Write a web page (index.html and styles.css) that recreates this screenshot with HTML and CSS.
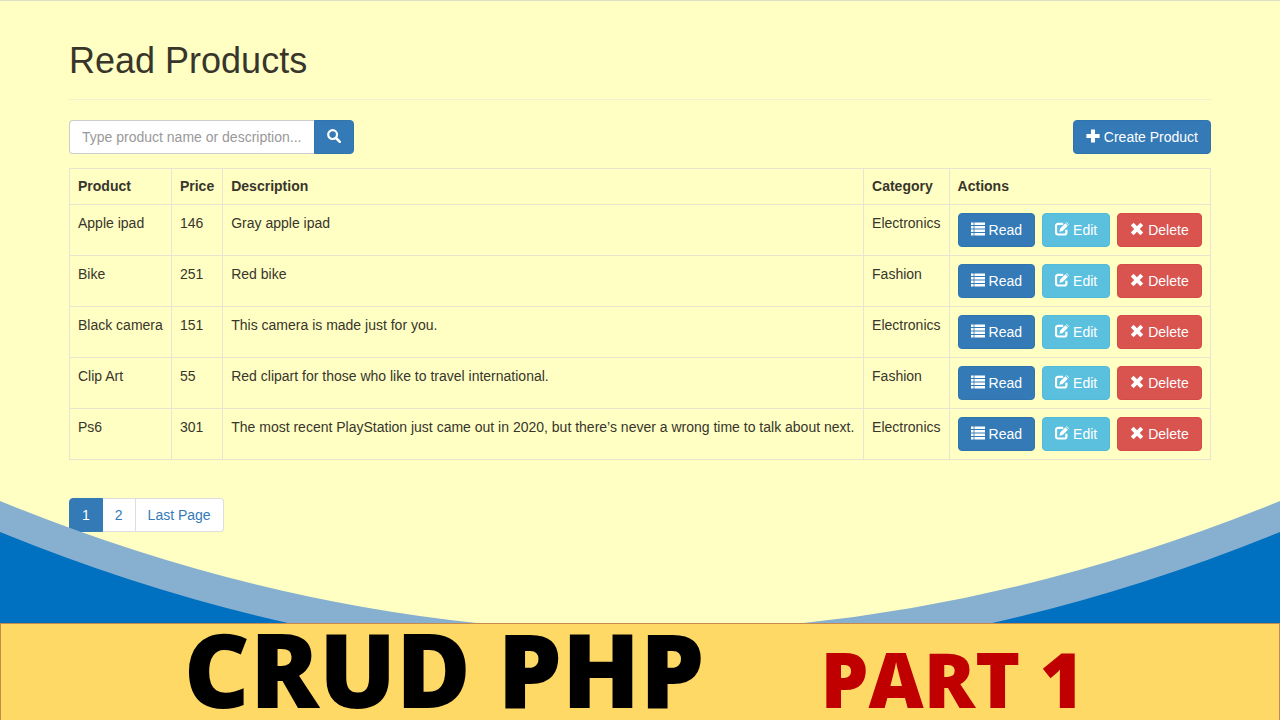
FILE: index.html
```html
<!DOCTYPE html>
<html lang="en">
<head>
    <meta charset="UTF-8">
    <meta name="viewport" content="width=device-width, initial-scale=1.0">
    <title>Read Products</title>
    <link rel="stylesheet" href="styles.css">
</head>
<body>
    <!-- Icons shared by the buttons -->
    <svg class="icon-defs" aria-hidden="true">
        <symbol id="icon-search" viewBox="0 0 14 14">
            <circle cx="5.6" cy="5.6" r="4.4" fill="none" stroke="currentColor" stroke-width="2.2"/>
            <path d="M9 9l3.8 3.8" stroke="currentColor" stroke-width="2.6" stroke-linecap="round"/>
        </symbol>
        <symbol id="icon-plus" viewBox="0 0 14 14">
            <path d="M5 .4h4V5h4.6v4H9v4.6H5V9H.4V5H5z" fill="currentColor"/>
        </symbol>
        <symbol id="icon-list" viewBox="0 0 14 14">
            <path d="M0 .5h2.6v2.6H0zM3.4 .5H14v2.6H3.4zM0 4h2.6v2.6H0zM3.4 4H14v2.6H3.4zM0 7.5h2.6v2.6H0zM3.4 7.5H14v2.6H3.4zM0 11h2.6v2.6H0zM3.4 11H14v2.6H3.4z" fill="currentColor"/>
        </symbol>
        <symbol id="icon-edit" viewBox="0 0 14 14">
            <path d="M8.2 1.9H3A2 2 0 0 0 1 3.9v6.6a2 2 0 0 0 2 2h6.4a2 2 0 0 0 2-2V7.8" fill="none" stroke="currentColor" stroke-width="2.2"/>
            <path d="M4.4 9.8l.8-3.4L10.4 1.2l2.5 2.5-5.2 5.2zM11.1 .5l.5-.5L14 2.4l-.5.5z" fill="currentColor"/>
        </symbol>
        <symbol id="icon-remove" viewBox="0 0 14 14">
            <path d="M3.6 .8L7 4.2 10.4 .8l2.8 2.8L9.8 7l3.4 3.4-2.8 2.8L7 9.8l-3.4 3.4-2.8-2.8L4.2 7 .8 3.6z" fill="currentColor"/>
        </symbol>
    </svg>

    <main class="page">
        <div class="container">
            <div class="page-header">
                <h1>Read Products</h1>
            </div>

            <!-- Search form and create button -->
            <div class="toolbar">
                <form class="search">
                    <input type="text" class="search-input" name="s" aria-label="Search products" placeholder="Type product name or description...">
                    <button type="submit" class="btn btn-primary search-btn" aria-label="Search"><svg class="icon"><use href="#icon-search"/></svg></button>
                </form>
                <a href="#" class="btn btn-primary"><svg class="icon"><use href="#icon-plus"/></svg>Create Product</a>
            </div>

            <!-- Product list -->
            <table class="products">
                <thead>
                    <tr>
                        <th>Product</th>
                        <th>Price</th>
                        <th>Description</th>
                        <th>Category</th>
                        <th>Actions</th>
                    </tr>
                </thead>
                <tbody>
                    <tr>
                        <td>Apple ipad</td>
                        <td>146</td>
                        <td>Gray apple ipad</td>
                        <td>Electronics</td>
                        <td>
                            <div class="actions">
                                <a href="#" class="btn btn-primary"><svg class="icon"><use href="#icon-list"/></svg>Read</a>
                                <a href="#" class="btn btn-info"><svg class="icon"><use href="#icon-edit"/></svg>Edit</a>
                                <a href="#" class="btn btn-danger"><svg class="icon"><use href="#icon-remove"/></svg>Delete</a>
                            </div>
                        </td>
                    </tr>
                    <tr>
                        <td>Bike</td>
                        <td>251</td>
                        <td>Red bike</td>
                        <td>Fashion</td>
                        <td>
                            <div class="actions">
                                <a href="#" class="btn btn-primary"><svg class="icon"><use href="#icon-list"/></svg>Read</a>
                                <a href="#" class="btn btn-info"><svg class="icon"><use href="#icon-edit"/></svg>Edit</a>
                                <a href="#" class="btn btn-danger"><svg class="icon"><use href="#icon-remove"/></svg>Delete</a>
                            </div>
                        </td>
                    </tr>
                    <tr>
                        <td>Black camera</td>
                        <td>151</td>
                        <td>This camera is made just for you.</td>
                        <td>Electronics</td>
                        <td>
                            <div class="actions">
                                <a href="#" class="btn btn-primary"><svg class="icon"><use href="#icon-list"/></svg>Read</a>
                                <a href="#" class="btn btn-info"><svg class="icon"><use href="#icon-edit"/></svg>Edit</a>
                                <a href="#" class="btn btn-danger"><svg class="icon"><use href="#icon-remove"/></svg>Delete</a>
                            </div>
                        </td>
                    </tr>
                    <tr>
                        <td>Clip Art</td>
                        <td>55</td>
                        <td>Red clipart for those who like to travel international.</td>
                        <td>Fashion</td>
                        <td>
                            <div class="actions">
                                <a href="#" class="btn btn-primary"><svg class="icon"><use href="#icon-list"/></svg>Read</a>
                                <a href="#" class="btn btn-info"><svg class="icon"><use href="#icon-edit"/></svg>Edit</a>
                                <a href="#" class="btn btn-danger"><svg class="icon"><use href="#icon-remove"/></svg>Delete</a>
                            </div>
                        </td>
                    </tr>
                    <tr>
                        <td>Ps6</td>
                        <td>301</td>
                        <td>The most recent PlayStation just came out in 2020, but there’s never a wrong time to talk about next.</td>
                        <td>Electronics</td>
                        <td>
                            <div class="actions">
                                <a href="#" class="btn btn-primary"><svg class="icon"><use href="#icon-list"/></svg>Read</a>
                                <a href="#" class="btn btn-info"><svg class="icon"><use href="#icon-edit"/></svg>Edit</a>
                                <a href="#" class="btn btn-danger"><svg class="icon"><use href="#icon-remove"/></svg>Delete</a>
                            </div>
                        </td>
                    </tr>
                </tbody>
            </table>

            <!-- Paging -->
            <ul class="pagination">
                <li><a href="#" class="active">1</a></li>
                <li><a href="#">2</a></li>
                <li><a href="#">Last Page</a></li>
            </ul>
        </div>

        <!-- Blue wave above the banner -->
        <svg class="wave" viewBox="0 0 1280 122" preserveAspectRatio="none" aria-hidden="true">
            <path class="wave-light" d="M0 0Q640 261 1280 0V122H0z"/>
            <path class="wave-dark" d="M0 31Q640 292 1280 31V122H0z"/>
        </svg>
    </main>

    <footer class="banner">
        <span class="banner-title">CRUD PHP</span>
        <span class="banner-part">PART 1</span>
    </footer>
</body>
</html>
```
FILE: styles.css
```css
* {
    box-sizing: border-box;
}

/* Basic page settings */
body {
    margin: 0;
    min-height: 100vh;
    display: flex;
    flex-direction: column;
    background: #ffffc4;
    border-top: 1px solid #dedfc8;
    color: #38352b;
    font-family: "Liberation Sans", Arial, sans-serif;
    font-size: 14px;
    line-height: 20px;
}

a {
    color: #337ab7;
    text-decoration: none;
}

.page {
    position: relative;
    flex: 1;
    overflow: hidden;
}

.container {
    margin: 0 69px;
}

.icon-defs {
    display: none;
}

/* Heading */
.page-header {
    margin: 40px 0 20px;
    padding-bottom: 18px;
    border-bottom: 1px solid #f3f0d0;
}

.page-header h1 {
    margin: 0;
    font-size: 36px;
    font-weight: 500;
    line-height: 40px;
}

/* Toolbar above the table */
.toolbar {
    display: flex;
    justify-content: space-between;
    margin-bottom: 14px;
}

.search {
    display: flex;
}

.search-input {
    width: 245px;
    height: 34px;
    padding: 6px 12px;
    background: #fff;
    border: 1px solid #ccc;
    border-right: 0;
    border-radius: 4px 0 0 4px;
    font: inherit;
}

.search-input::placeholder {
    color: #999;
}

.search .search-btn {
    border-radius: 0 4px 4px 0;
}

/* Buttons */
.btn {
    display: inline-flex;
    align-items: center;
    gap: 4px;
    height: 34px;
    padding: 0 12px;
    border: 1px solid transparent;
    border-radius: 4px;
    color: #fff;
    font: inherit;
    white-space: nowrap;
}

.btn-primary {
    background: #337ab7;
    border-color: #3073ad;
}

.btn-info {
    background: #5bc0de;
    border-color: #52bbd9;
}

.btn-danger {
    background: #d9534f;
    border-color: #d54b47;
}

.icon {
    width: 14px;
    height: 14px;
    margin-bottom: 2px;
}

/* Product table */
.products {
    width: 100%;
    border-collapse: collapse;
}

.products th,
.products td {
    padding: 8px;
    border: 1px solid #e8e4cf;
    text-align: left;
    vertical-align: top;
}

.products th {
    padding-top: 7px;
}

.actions {
    display: flex;
    gap: 7px;
}

/* Pagination */
.pagination {
    display: flex;
    margin: 38px 0 0;
    padding: 0;
    list-style: none;
}

.pagination a {
    display: block;
    padding: 6px 12px;
    background: #fff;
    border: 1px solid #ddd;
    border-left: 0;
}

.pagination .active {
    background: #337ab7;
    border: 1px solid #337ab7;
    color: #fff;
}

.pagination li:first-child a {
    border-radius: 4px 0 0 4px;
}

.pagination li:last-child a {
    border-radius: 0 4px 4px 0;
}

/* Wave decoration */
.wave {
    position: absolute;
    left: 0;
    bottom: 0;
    width: 100%;
    height: 122px;
    pointer-events: none;
}

.wave-light {
    fill: #87b0d0;
}

.wave-dark {
    fill: #0070c0;
}

/* Bottom banner */
.banner {
    display: flex;
    justify-content: center;
    align-items: baseline;
    gap: 116px;
    height: 97px;
    padding-right: 12px;
    background: #ffd966;
    border: 1px solid #c58a4c;
    border-bottom: 0;
    font-family: "Open Sans", Lato, sans-serif;
    font-weight: 800;
    line-height: 90px;
    white-space: nowrap;
}

.banner-title {
    color: #000;
    font-size: 102px;
}

.banner-part {
    color: #c00000;
    font-size: 76px;
}
```
